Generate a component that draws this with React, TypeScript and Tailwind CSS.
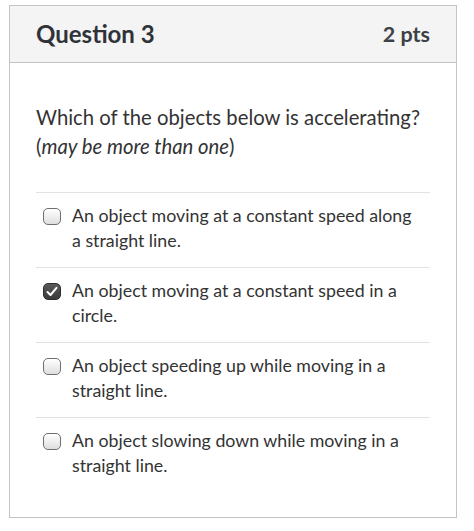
const options = [
  { text: "An object moving at a constant speed along a straight line.", checked: false },
  { text: "An object moving at a constant speed in a circle.", checked: true },
  { text: "An object speeding up while moving in a straight line.", checked: false },
  { text: "An object slowing down while moving in a straight line.", checked: false },
];

function Checkbox({ checked }: { checked: boolean }) {
  if (checked) {
    return (
      <span className="mt-[5px] flex h-[17px] w-[18px] shrink-0 items-center justify-center rounded-[5px] border border-[#2e2e2e] bg-gradient-to-b from-[#5a5a5a] to-[#3a3a3a]">
        <svg width="12" height="11" viewBox="0 0 12 11" fill="none">
          <path d="M1.5 6 L4.5 9 L10.5 1.8" stroke="#fff" strokeWidth="2" strokeLinecap="round" strokeLinejoin="round" />
        </svg>
      </span>
    );
  }
  return (
    <span className="mt-[5px] h-[17px] w-[18px] shrink-0 rounded-[5px] border-[1.5px] border-[#6f6f6f] bg-gradient-to-b from-[#ffffff] to-[#dedede]" />
  );
}

export default function App() {
  return (
    <div className="min-h-[531px] bg-white pt-[5px] pl-[9px] font-['Lato','Liberation_Sans',sans-serif] text-[#333]">
      <div className="w-[448px] border border-[#c4c4c4]">
        <div className="flex h-[57px] items-center justify-between border-b border-[#c4c4c4] bg-[#f4f4f4] px-[26px]">
          <h2 className="text-[24px] font-bold text-[#2f3338]">Question 3</h2>
          <span className="text-[21.5px] font-bold text-[#3d4145]">2 pts</span>
        </div>
        <div className="px-[26px] pt-[40px] pb-[25px]">
          <p className="text-[20.3px] leading-[29px]">
            Which of the objects below is accelerating?
            <br />
            (<i>may be more than one</i>)
          </p>
          <div className="mt-[31px]">
            {options.map((o) => (
              <div key={o.text} className="flex gap-[11px] border-t border-[#e2e2e2] pt-[10px] pb-[14px] pl-[7px]">
                <Checkbox checked={o.checked} />
                <p className="w-[350px] text-[17.8px] leading-[25px]">{o.text}</p>
              </div>
            ))}
          </div>
        </div>
      </div>
    </div>
  );
}
